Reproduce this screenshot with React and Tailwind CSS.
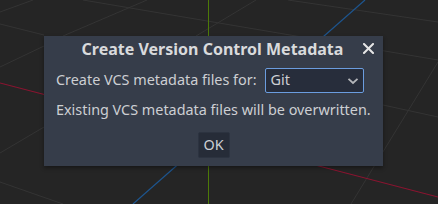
import React from 'react';

// 3D viewport grid behind the dialog
function ViewportGrid() {
  const grid = [
    [0, 12, 33, 0],
    [83, 0, 438, 60],
    [288, 0, 438, 22],
    [196, 36, 256, 0],
    [63, 36, 147, 0],
    [0, 24, 44, 35],
    [0, 67, 44, 46],
    [0, 153, 44, 127],
    [0, 182, 63, 204],
    [383, 105, 438, 117],
    [351, 204, 438, 62],
  ];
  return (
    <svg className="absolute inset-0" width="438" height="204" viewBox="0 0 438 204">
      {grid.map(([x1, y1, x2, y2], i) => (
        <line key={i} x1={x1} y1={y1} x2={x2} y2={y2} stroke="#343434" strokeWidth="1" />
      ))}
      <line x1="0" y1="83" x2="438" y2="197" stroke="#8a1430" strokeWidth="1.2" />
      <line x1="365" y1="0" x2="133" y2="204" stroke="#1d558f" strokeWidth="1.2" />
      <line x1="208.5" y1="0" x2="208.5" y2="204" stroke="#4d7a08" strokeWidth="1" />
    </svg>
  );
}

export default function App() {
  return (
    <div
      className="relative w-[438px] h-[204px] overflow-hidden bg-[#252525]"
      style={{ fontFamily: '"Noto Sans", "Open Sans", sans-serif' }}
    >
      <ViewportGrid />

      {/* dialog window */}
      <div className="absolute left-[44px] top-[36px] w-[339px] h-[130px] bg-[#363d4a] shadow-[0_2px_4px_rgba(0,0,0,0.4)] flex flex-col">
        <div className="relative h-[26px] flex items-center justify-center">
          <span className="text-[16px] font-bold text-[#d9dadc] leading-none pr-[2px]">Create Version Control Metadata</span>
          <button className="absolute right-[9px] top-[7px] w-[11px] h-[11px]">
            <svg width="11" height="11" viewBox="0 0 11 11">
              <path d="M1 1L10 10M10 1L1 10" stroke="#e6e6e6" strokeWidth="2" strokeLinecap="square" />
            </svg>
          </button>
        </div>

        <div className="px-[12px] flex flex-col text-[14.4px] text-[#cdcfd3]">
          <div className="mt-[6px] h-[25px] flex items-center gap-[8px]">
            <span className="leading-none whitespace-nowrap">Create VCS metadata files for:</span>
            <div className="w-[99px] h-[25px] border border-[#6b9ddf] bg-[#272d3b] flex items-center justify-between pl-[5px] pr-[4px] rounded-[2px]">
              <span className="leading-none">Git</span>
              <svg width="12" height="8" viewBox="0 0 12 8">
                <path d="M1.5 1.8L6 6L10.5 1.8" fill="none" stroke="#b4b6ba" strokeWidth="1.8" />
              </svg>
            </div>
          </div>

          <div className="mt-[7px] h-[20px] flex items-center">
            <span className="leading-none whitespace-nowrap">Existing VCS metadata files will be overwritten.</span>
          </div>

          <div className="mt-[12px] flex justify-center">
            <button className="w-[32px] h-[26px] bg-[#262c38] border border-[#2c3340] flex items-center justify-center text-[#cdcfd3] leading-none rounded-[2px]">
              OK
            </button>
          </div>
        </div>
      </div>
    </div>
  );
}
